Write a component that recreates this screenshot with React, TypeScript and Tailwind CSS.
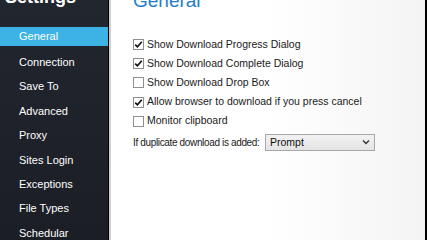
import React from "react";

const items = ["General","Connection","Save To","Advanced","Proxy","Sites Login","Exceptions","File Types","Schedular"];

function Check({ checked }: { checked: boolean }) {
  return (
    <div className="w-[11px] h-[11px] border border-[#8f8f8f] bg-white flex items-center justify-center shrink-0">
      {checked && (
        <svg width="9" height="9" viewBox="0 0 9 9">
          <path d="M1.2 4.6 L3.4 6.8 L7.8 1.8" stroke="#111" strokeWidth="1.7" fill="none" />
        </svg>
      )}
    </div>
  );
}

export default function App() {
  const opts: [string, boolean][] = [
    ["Show Download Progress Dialog", true],
    ["Show Download Complete Dialog", true],
    ["Show Download Drop Box", false],
    ["Allow browser to download if you press cancel", true],
    ["Monitor clipboard", false],
  ];
  return (
    <div className="w-[427px] h-[240px] flex overflow-hidden bg-white" style={{ fontFamily: '"Liberation Sans", Arial, sans-serif' }}>
      <div className="w-[108px] h-full bg-gradient-to-b from-[#22262f] to-[#1b1e25] flex flex-col shrink-0 overflow-hidden">
        <div className="h-[27px] shrink-0 relative">
          <div className="absolute left-[5px] top-[-14px] text-white font-bold text-[18px] leading-[22px]">Settings</div>
        </div>
        {items.map((it, i) => (
          <div key={it} className={`shrink-0 flex items-center pl-[19px] text-[11px] text-white ${i === 0 ? "bg-[#3cb3e4] h-[19px] mb-[4px]" : "h-[24.4px]"}`}>
            {it}
          </div>
        ))}
      </div>
      <div className="w-px h-full bg-black" />
      <div className="w-[2px] h-full bg-[#d0d0d0]" />
      <div className="flex-1 h-full relative bg-gradient-to-r from-white via-white to-[#f4f4f4]">
        <div className="absolute left-[22px] top-[-10px] text-[#1f7dc9] text-[19px] leading-[22px]">General</div>
        <div className="pt-[35px] pl-[22px] flex flex-col">
          {opts.map(([t, c]) => (
            <div key={t} className="h-[19.2px] flex items-center gap-[3px]">
              <Check checked={c} />
              <span className="text-[10.5px] text-[#1a1a1a] whitespace-nowrap">{t}</span>
            </div>
          ))}
          <div className="flex items-center mt-[3px] h-[17px]">
            <span className="text-[10px] text-[#1a1a1a] w-[132px] shrink-0 whitespace-nowrap tracking-[-0.35px]">If duplicate download is added:</span>
            <div className="w-[110px] h-[17px] shrink-0 border border-[#a8a8a8] bg-gradient-to-b from-[#f2f2f2] to-[#e4e4e4] flex items-center justify-between px-[4px]">
              <span className="text-[10.5px] text-[#111]">Prompt</span>
              <svg width="8" height="6" viewBox="0 0 8 6"><path d="M1 1.5 L4 4.5 L7 1.5" stroke="#333" strokeWidth="1.4" fill="none" /></svg>
            </div>
          </div>
        </div>
      </div>
      <div className="w-[2px] h-full bg-black" />
    </div>
  );
}
